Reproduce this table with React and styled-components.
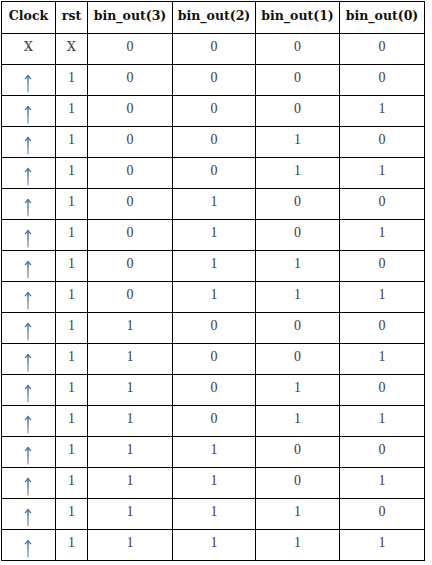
import React from "react";
import styled, { createGlobalStyle } from "styled-components";

const GlobalStyle = createGlobalStyle`
  body {
    margin: 0;
    padding: 1px 0 0 1px;
    background: #ffffff;
  }
`;

const Table = styled.table`
  border-collapse: collapse;
  table-layout: fixed;
  width: 423px;
  font-family: "DejaVu Serif", "Liberation Serif", serif;
`;

const HeadCell = styled.th`
  width: ${(p) => p.w}px;
  height: 32px;
  border: 1px solid #000;
  padding: 0;
  vertical-align: top;
  padding-top: 6px;
  box-sizing: border-box;
  font-size: 12.5px;
  font-weight: bold;
  color: #111;
  text-align: center;
  white-space: nowrap;
`;

const Row = styled.tr`
  height: 31px;
`;

const Cell = styled.td`
  border: 1px solid #000;
  padding: 5px 0 0;
  vertical-align: top;
  text-align: center;
  font-size: ${(p) => (p.serif ? "12.5px" : "14px")};
  line-height: 16px;
  color: #404040;
  font-family: ${(p) =>
    p.serif ? '"DejaVu Serif", serif' : '"Liberation Serif", "Times New Roman", serif'};
  font-weight: normal;
`;

const ArrowBox = styled.div`
  display: flex;
  justify-content: center;
  padding-top: 4px;
  padding-right: 1px;
`;

const UpArrow = () => (
  <ArrowBox>
    <svg width="8" height="19" viewBox="0 0 8 19">
      <defs>
        <linearGradient id="arrowGrad" gradientUnits="userSpaceOnUse" x1="0" y1="0" x2="0" y2="19">
          <stop offset="0" stopColor="#3c6a98" />
          <stop offset="1" stopColor="#aab6c4" />
        </linearGradient>
      </defs>
      <path d="M4 1.5 V18.5" stroke="url(#arrowGrad)" strokeWidth="1.6" fill="none" />
      <path d="M1 5.2 L4 1.5 L7 5.2" stroke="#4a72a0" strokeWidth="1.2" fill="none" />
    </svg>
  </ArrowBox>
);

const columns = [
  { label: "Clock", w: 54 },
  { label: "rst", w: 32 },
  { label: "bin_out(3)", w: 85 },
  { label: "bin_out(2)", w: 83 },
  { label: "bin_out(1)", w: 84 },
  { label: "bin_out(0)", w: 85 },
];

const counts = Array.from({ length: 16 }, (_, n) =>
  [3, 2, 1, 0].map((b) => (n >> b) & 1)
);

export default function App() {
  return (
    <>
      <GlobalStyle />
      <Table>
        <thead>
          <tr>
            {columns.map((c) => (
              <HeadCell key={c.label} w={c.w}>
                {c.label}
              </HeadCell>
            ))}
          </tr>
        </thead>
        <tbody>
          <Row>
            <Cell serif>X</Cell>
            <Cell serif>X</Cell>
            <Cell>0</Cell>
            <Cell>0</Cell>
            <Cell>0</Cell>
            <Cell>0</Cell>
          </Row>
          {counts.map((bits, i) => (
            <Row key={i}>
              <Cell>
                <UpArrow />
              </Cell>
              <Cell>1</Cell>
              {bits.map((b, j) => (
                <Cell key={j}>{b}</Cell>
              ))}
            </Row>
          ))}
        </tbody>
      </Table>
    </>
  );
}
